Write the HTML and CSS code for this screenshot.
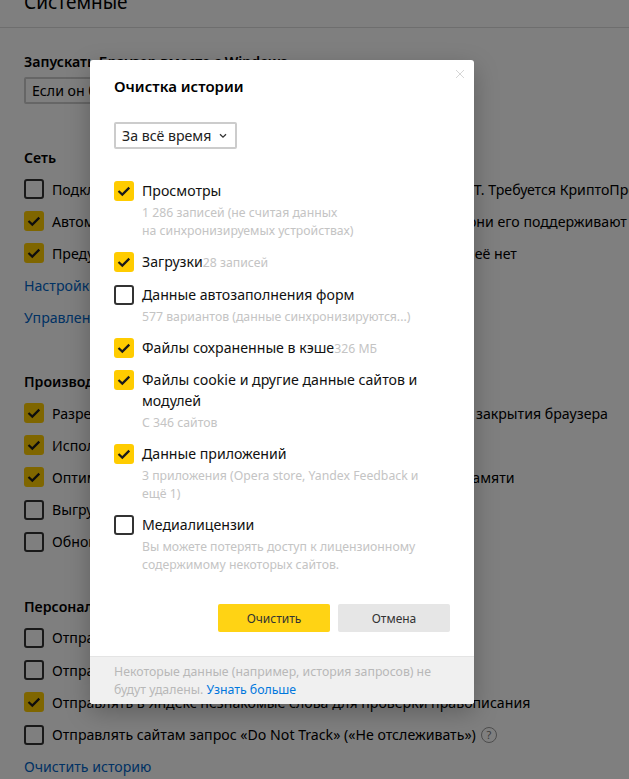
FILE: index.html
```html
<!DOCTYPE html>
<html lang="ru">
<head>
<meta charset="utf-8">
<title>Очистка истории</title>
<link rel="stylesheet" href="styles.css">
</head>
<body>
<main class="settings">
  <h1 class="page-title">Системные</h1>
  <hr class="rule">
  <h2 class="startup-label">Запускать Браузер вместе с Windows</h2>
  <div class="startup-select">Если он был открыт</div>

  <section class="group group-net">
    <h2 class="group-title">Сеть</h2>
    <div class="row"><span class="box"></span>Подключаться к сайтам, использующим шифрование по ГОСТ. Требуется КриптоПро CSP</div>
    <div class="row"><span class="box on"><svg viewBox="0 0 20 20"><path d="M4.5 10l3.8 3.6 7-7"/></svg></span>Автоматически открывать сайты по протоколу HTTPS, когда они его поддерживают</div>
    <div class="row"><span class="box on"><svg viewBox="0 0 20 20"><path d="M4.5 10l3.8 3.6 7-7"/></svg></span>Предупреждать при вводе карты на сайтах без защиты, если её нет</div>
    <a class="row link">Настройки прокси-сервера</a>
    <a class="row link">Управление сертификатами</a>
  </section>

  <section class="group group-perf">
    <h2 class="group-title">Производительность</h2>
    <div class="row"><span class="box on"><svg viewBox="0 0 20 20"><path d="M4.5 10l3.8 3.6 7-7"/></svg></span>Разрешать приложениям работать в фоновом режиме после закрытия браузера</div>
    <div class="row"><span class="box on"><svg viewBox="0 0 20 20"><path d="M4.5 10l3.8 3.6 7-7"/></svg></span>Использовать аппаратное ускорение, если это возможно</div>
    <div class="row"><span class="box on"><svg viewBox="0 0 20 20"><path d="M4.5 10l3.8 3.6 7-7"/></svg></span>Оптимизировать изображения для экономии оперативной памяти</div>
    <div class="row"><span class="box"></span>Выгружать из памяти неиспользуемые вкладки</div>
    <div class="row"><span class="box"></span>Обновлять браузер, даже если он не запущен</div>
  </section>

  <section class="group group-personal">
    <h2 class="group-title">Персональные данные</h2>
    <div class="row"><span class="box"></span>Отправлять Яндексу статистику использования</div>
    <div class="row"><span class="box"></span>Отправлять отчёты о сбоях</div>
    <div class="row"><span class="box on"><svg viewBox="0 0 20 20"><path d="M4.5 10l3.8 3.6 7-7"/></svg></span>Отправлять в Яндекс незнакомые слова для проверки правописания</div>
    <div class="row"><span class="box"></span>Отправлять сайтам запрос «Do Not Track» («Не отслеживать»)<span class="help">?</span></div>
    <a class="row link">Очистить историю</a>
  </section>
</main>

<div class="overlay"></div>

<div class="dialog">
  <div class="dialog-body">
    <svg class="close" viewBox="0 0 10 10"><path d="M1 1l8 8M9 1l-8 8"/></svg>
    <h2 class="dialog-title">Очистка истории</h2>
    <div class="period">За всё время<svg class="chevron" viewBox="0 0 8 6"><path d="M1 1.2l3 3 3-3"/></svg></div>
    <div class="options">
      <div class="option">
        <span class="box on"><svg viewBox="0 0 20 20"><path d="M4.5 10l3.8 3.6 7-7"/></svg></span>
        <div class="option-text"><div class="option-title">Просмотры</div><div class="option-note">1 286 записей (не считая данных<br>на синхронизируемых устройствах)</div></div>
      </div>
      <div class="option">
        <span class="box on"><svg viewBox="0 0 20 20"><path d="M4.5 10l3.8 3.6 7-7"/></svg></span>
        <div class="option-text"><div class="option-title">Загрузки<span class="inline-note">28 записей</span></div></div>
      </div>
      <div class="option">
        <span class="box"></span>
        <div class="option-text"><div class="option-title">Данные автозаполнения форм</div><div class="option-note">577 вариантов (данные синхронизируются...)</div></div>
      </div>
      <div class="option">
        <span class="box on"><svg viewBox="0 0 20 20"><path d="M4.5 10l3.8 3.6 7-7"/></svg></span>
        <div class="option-text"><div class="option-title">Файлы сохраненные в кэше<span class="inline-note">326 МБ</span></div></div>
      </div>
      <div class="option">
        <span class="box on"><svg viewBox="0 0 20 20"><path d="M4.5 10l3.8 3.6 7-7"/></svg></span>
        <div class="option-text"><div class="option-title">Файлы cookie и другие данные сайтов и модулей</div><div class="option-note">С 346 сайтов</div></div>
      </div>
      <div class="option">
        <span class="box on"><svg viewBox="0 0 20 20"><path d="M4.5 10l3.8 3.6 7-7"/></svg></span>
        <div class="option-text"><div class="option-title">Данные приложений</div><div class="option-note">3 приложения (Opera store, Yandex Feedback и ещё 1)</div></div>
      </div>
      <div class="option">
        <span class="box"></span>
        <div class="option-text"><div class="option-title">Медиалицензии</div><div class="option-note">Вы можете потерять доступ к лицензионному содержимому некоторых сайтов.</div></div>
      </div>
    </div>
    <div class="actions">
      <button class="btn primary">Очистить</button>
      <button class="btn">Отмена</button>
    </div>
  </div>
  <div class="dialog-foot">Некоторые данные (например, история запросов) не будут удалены. <a class="foot-link">Узнать больше</a></div>
</div>
</body>
</html>
```

FILE: styles.css
```css
* { box-sizing: border-box; }
html, body { height: 100%; }
body {
  margin: 0;
  overflow: hidden;
  background: #fff;
  color: #000;
  font-family: "Noto Sans", "Open Sans", sans-serif;
  font-size: 14.15px;
}
.settings { padding: 0 0 0 24px; margin-top: -12px; white-space: nowrap; }
.page-title { margin: 0; font-size: 19px; font-weight: 400; line-height: 28px; }
.rule { margin: 11px 0 0 -24px; border: 0; border-top: 1px solid #ddd; }
.startup-label { margin: 23px 0 0; font-size: 14.15px; font-weight: 600; line-height: 22px; }
.startup-select { margin-top: 4px; width: 200px; height: 27px; border: 2px solid #ccc; border-radius: 2px; padding-left: 6px; line-height: 23px; }
.group-net { margin-top: 39px; }
.group-perf { margin-top: 33px; }
.group-personal { margin-top: 34px; }
.group-title { margin: 0; font-size: 14.15px; font-weight: 600; line-height: 30px; height: 30px; }
.row { display: flex; align-items: center; height: 32.2px; }
.row .box { margin-right: 8px; }
.link { color: #0064c8; }
.help { margin-left: 5px; width: 16px; height: 16px; border: 1px solid #999; border-radius: 50%; font-size: 11px; line-height: 14px; text-align: center; color: #777; }

.box { flex: none; display: block; width: 20px; height: 20px; border: 2px solid #333; border-radius: 3px; background: #fff; }
.box.on { border: 0; background: #ffcc00; }
.box svg { display: block; width: 20px; height: 20px; }
.box svg path { fill: none; stroke: #1a1a1a; stroke-width: 2.2; }

.overlay { position: absolute; inset: 0; background: rgba(0, 0, 0, .5); }
.dialog {
  position: absolute;
  left: 90px;
  top: 60px;
  width: 384px;
  height: 644px;
  display: flex;
  flex-direction: column;
  background: #fff;
  border-radius: 3px;
  box-shadow: 0 8px 24px rgba(0, 0, 0, .25);
}
.dialog-body { position: relative; flex: 1; padding: 16px 24px 0; }
.close { position: absolute; top: 9px; right: 9px; width: 10px; height: 10px; }
.close path { fill: none; stroke: #d6d6d6; stroke-width: 1; }
.dialog-title { margin: 0; font-size: 15px; font-weight: 600; line-height: 20px; }
.period {
  display: flex; align-items: center; justify-content: space-between;
  margin-top: 26px; width: 123px; height: 27px; padding: 0 8px 0 6px;
  border: 2px solid #ccc; border-radius: 2px; line-height: 23px; color: #222;
}
.chevron { width: 8px; height: 6px; }
.chevron path { fill: none; stroke: #333; stroke-width: 1.3; }
.options { display: flex; flex-direction: column; gap: 12px; margin-top: 32px; width: 312px; }
.option { display: flex; gap: 8px; }
.option-text { width: 284px; }
.option-title { line-height: 20.5px; color: #111; }
.option-note { margin-top: 2.5px; font-size: 12.25px; line-height: 18px; color: #c4c4c4; }
.inline-note { font-size: 12.25px; line-height: 1; color: #c4c4c4; }
.actions { position: absolute; right: 24px; top: 544px; display: flex; gap: 8px; }
.btn { width: 112px; height: 28px; padding: 0; border: 0; border-radius: 2px; background: #e6e6e6; color: #333; font: inherit; font-size: 12px; }
.btn.primary { background: #ffd314; }
.dialog-foot { height: 48px; padding: 6px 24px 0; background: #f0f0f0; border-top: 1px solid #e4e4e4; border-radius: 0 0 3px 3px; font-size: 12.3px; line-height: 18px; color: #b8b8b8; }
.foot-link { color: #0077dd; }
```
